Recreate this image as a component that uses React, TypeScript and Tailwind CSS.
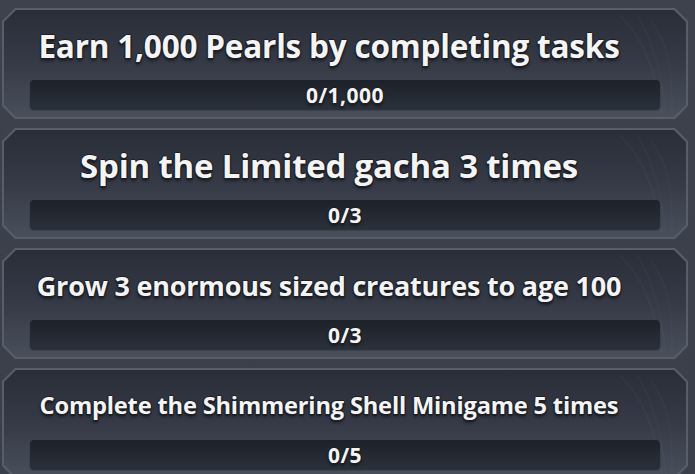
import React from "react";

const tasks = [
  { title: "Earn 1,000 Pearls by completing tasks", progress: "0/1,000", size: "text-[31.5px]" },
  { title: "Spin the Limited gacha 3 times", progress: "0/3", size: "text-[33px]" },
  { title: "Grow 3 enormous sized creatures to age 100", progress: "0/3", size: "text-[27px]" },
  { title: "Complete the Shimmering Shell Minigame 5 times", progress: "0/5", size: "text-[23.7px]" },
];

const outline =
  "[text-shadow:0_2px_0_#1c1f26,1px_0_0_#1c1f26,-1px_0_0_#1c1f26,0_-1px_0_#1c1f26,1px_1px_0_#1c1f26,-1px_1px_0_#1c1f26,0_3px_3px_rgba(0,0,0,0.45)]";

function Leaf() {
  return (
    <svg className="absolute right-[6px] top-[4px]" width="70" height="104" viewBox="0 0 70 104" fill="none">
      <path d="M10 2 C 30 20, 45 50, 52 100" stroke="rgba(120,130,140,0.08)" strokeWidth="2" />
      <path d="M28 2 C 42 25, 50 55, 56 100" stroke="rgba(120,130,140,0.06)" strokeWidth="2" />
      <path d="M40 6 C 60 30, 62 60, 62 98" stroke="rgba(120,130,140,0.06)" strokeWidth="2" />
    </svg>
  );
}

function Card({ title, progress, size }: { title: string; progress: string; size: string }) {
  return (
    <div className="relative h-[111px] w-full bg-[#575d69] p-[2px] [clip-path:polygon(13px_0,calc(100%_-_13px)_0,100%_13px,100%_calc(100%_-_13px),calc(100%_-_13px)_100%,13px_100%,0_calc(100%_-_13px),0_13px)]">
      <div className="relative flex h-full w-full flex-col bg-gradient-to-b from-[#292e39] via-[#353a46] to-[#4a505b] [clip-path:polygon(12px_0,calc(100%_-_12px)_0,100%_12px,100%_calc(100%_-_12px),calc(100%_-_12px)_100%,12px_100%,0_calc(100%_-_12px),0_12px)]">
        <Leaf />
        <div className="relative flex h-[69px] items-center justify-center pl-[20px] pr-[52px] pt-[2px]">
          <span className={`${size} font-bold leading-none tracking-[-0.2px] text-[#f4f4f4] whitespace-nowrap ${outline}`}>
            {title}
          </span>
        </div>
        <div className="relative mx-[25px] flex h-[32px] items-center justify-center rounded-[5px] border border-[#3c424d] bg-gradient-to-b from-[#1d2129] to-[#2b313b]">
          <span className={`text-[21px] font-bold leading-none tracking-[0.5px] text-[#f4f4f4] ${outline}`}>{progress}</span>
        </div>
      </div>
    </div>
  );
}

export default function App() {
  return (
    <div
      className="h-[474px] w-[695px] overflow-hidden bg-gradient-to-b from-[#3d424c] to-[#3a3f49]"
      style={{ fontFamily: '"Open Sans", "Noto Sans", sans-serif' }}
    >
      <div className="flex flex-col gap-[9px] pl-[2px] pr-[7px] pt-[8px]">
        {tasks.map((t) => (
          <Card key={t.title} {...t} />
        ))}
      </div>
    </div>
  );
}
